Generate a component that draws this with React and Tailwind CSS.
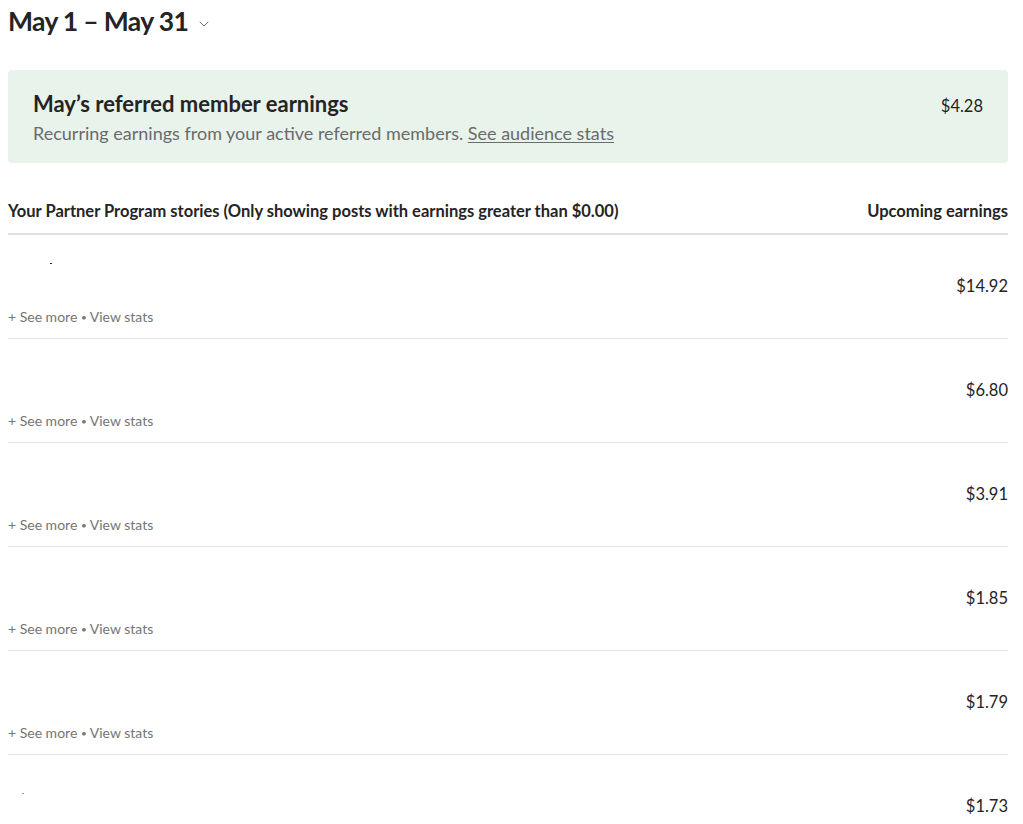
import { ChevronDown } from "lucide-react";

const STORIES = [
  { amount: "$14.92", dot: "left-[42px] top-[28px]" },
  { amount: "$6.80" },
  { amount: "$3.91" },
  { amount: "$1.85" },
  { amount: "$1.79" },
  { amount: "$1.73", last: true },
];

function StoryRow({ story }) {
  return (
    <div className="relative flex h-[104px] items-center justify-between border-b border-[#e6e6e6]">
      {story.dot && (
        <span className={`absolute h-px w-[2px] bg-[#242424] ${story.dot}`}></span>
      )}
      {story.last ? (
        <span className="absolute left-[14px] top-[38px] h-px w-[2px] bg-[#9a9a9a]"></span>
      ) : (
        <div className="absolute bottom-[11px] left-0 text-[14px] text-[#757575]">
          + See more <span className="text-[10px] align-[1px]">•</span> View stats
        </div>
      )}
      <div></div>
      <div className="text-[16.5px] text-[#242424]">{story.amount}</div>
    </div>
  );
}

export default function App() {
  return (
    <div
      className="min-h-screen bg-white pl-2 pr-[15px] text-[#242424]"
      style={{ fontFamily: "Lato, 'Noto Sans', sans-serif" }}
    >
      {/* header */}
      <div className="flex h-[44px] items-center gap-2">
        <h1 className="text-[26.5px] font-bold tracking-tight">May 1 – May 31</h1>
        <ChevronDown className="mt-1 h-4 w-4 text-[#6b6b6b]" strokeWidth={1.5} />
      </div>

      {/* referred earnings */}
      <section className="mt-[26px] flex justify-between rounded bg-[#e8f3ec] px-[25px] pb-[16px] pt-[20px]">
        <div>
          <h2 className="text-[22px] font-bold leading-7">May’s referred member earnings</h2>
          <p className="mt-0.5 text-[18px] text-[#6b6b6b]">
            Recurring earnings from your active referred members.{" "}
            <span className="underline underline-offset-2">See audience stats</span>
          </p>
        </div>
        <div className="pt-1 text-[16.5px]">$4.28</div>
      </section>

      {/* table */}
      <div className="mt-[36px] flex items-end justify-between border-b-2 border-[#e0e0e0] pb-[9px] text-[16.5px] font-bold">
        <span>Your Partner Program stories (Only showing posts with earnings greater than $0.00)</span>
        <span>Upcoming earnings</span>
      </div>
      {STORIES.map((s, i) => (
        <StoryRow key={i} story={s} />
      ))}
    </div>
  );
}
